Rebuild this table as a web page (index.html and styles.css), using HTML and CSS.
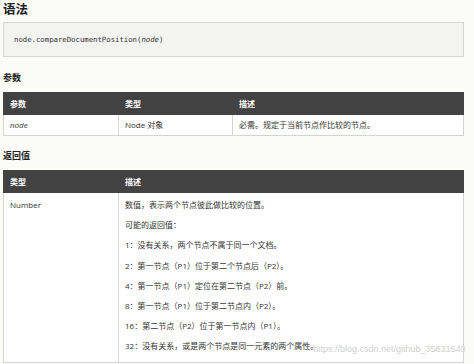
FILE: index.html
```html
<!DOCTYPE html>
<html lang="zh">
<head>
<meta charset="utf-8">
<link rel="stylesheet" href="styles.css">
</head>
<body>
<h2 class="title">语法</h2>
<pre class="code">node.compareDocumentPosition(<i>node</i>)</pre>

<h3 class="sub">参数</h3>
<table class="tbl">
  <colgroup><col class="c1"><col class="c2"><col></colgroup>
  <thead><tr><th>参数</th><th>类型</th><th>描述</th></tr></thead>
  <tbody><tr><td><i>node</i></td><td>Node 对象</td><td>必需。规定于当前节点作比较的节点。</td></tr></tbody>
</table>

<h3 class="sub sub2">返回值</h3>
<table class="tbl">
  <colgroup><col class="c1"><col></colgroup>
  <thead><tr><th>类型</th><th>描述</th></tr></thead>
  <tbody><tr>
    <td class="top"><p>Number</p></td>
    <td class="top">
      <p>数值，表示两个节点彼此做比较的位置。</p>
      <p>可能的返回值：</p>
      <p>1：没有关系，两个节点不属于同一个文档。</p>
      <p>2：第一节点（P1）位于第二个节点后（P2）。</p>
      <p>4：第一节点（P1）定位在第二节点（P2）前。</p>
      <p>8：第一节点（P1）位于第二节点内（P2）。</p>
      <p>16：第二节点（P2）位于第一节点内（P1）。</p>
      <p>32：没有关系，或是两个节点是同一元素的两个属性。</p>
    </td>
  </tr></tbody>
</table>
<div class="watermark">https://blog.csdn.net/github_35631540</div>
</body>
</html>
```
FILE: styles.css
```css
html, body {
  margin: 0;
  padding: 0;
  background: #fbfbf7;
}
body {
  position: relative;
  width: 474px;
  height: 364px;
  overflow: hidden;
  padding: 0 0 0 3px;
  box-sizing: border-box;
  font-family: "Open Sans", "Noto Sans CJK SC", sans-serif;
  font-size: 8px;
  color: #333;
}
.title {
  margin: 0;
  font-size: 12.5px;
  line-height: 18px;
  font-weight: bold;
  color: #222;
  font-family: "Noto Sans CJK SC", sans-serif;
}
.code {
  margin: 4px 0 0 0;
  width: 461px;
  box-sizing: border-box;
  background: #f3f3f2;
  border: 1px solid #d6d6d4;
  padding: 11px 10px;
  line-height: 11px;
  font-family: "DejaVu Sans Mono", monospace;
  font-size: 7.3px;
  color: #333;
}
.sub {
  margin: 14px 0 0 0;
  font-size: 9px;
  line-height: 14px;
  font-weight: bold;
  color: #222;
  font-family: "Noto Sans CJK SC", sans-serif;
}
.sub2 {
  margin-top: 13px;
}
.tbl {
  margin-top: 7px;
  width: 461px;
  table-layout: fixed;
  border-collapse: collapse;
  background: #fff;
}
.c1 { width: 115px; }
.c2 { width: 114px; }
.tbl th {
  background: #424242;
  color: #fff;
  text-align: left;
  font-weight: bold;
  height: 21px;
  padding: 0 6px;
  line-height: 12px;
  font-size: 8px;
  border: 1px solid #424242;
  font-family: "Noto Sans CJK SC", sans-serif;
}
.tbl td {
  border: 1px solid #d4d4d2;
  padding: 0 6px;
  height: 20px;
  line-height: 12px;
  vertical-align: middle;
}
.tbl td.top {
  vertical-align: top;
  padding-top: 2px;
  padding-bottom: 5px;
}
.tbl p {
  margin: 0;
  line-height: 20.2px;
  white-space: nowrap;
}
.watermark {
  position: absolute;
  left: 313px;
  top: 344px;
  font-family: "Liberation Sans", sans-serif;
  font-size: 9px;
  color: #d0d0d0;
  text-shadow: 0 0 1px #fff;
}
```
